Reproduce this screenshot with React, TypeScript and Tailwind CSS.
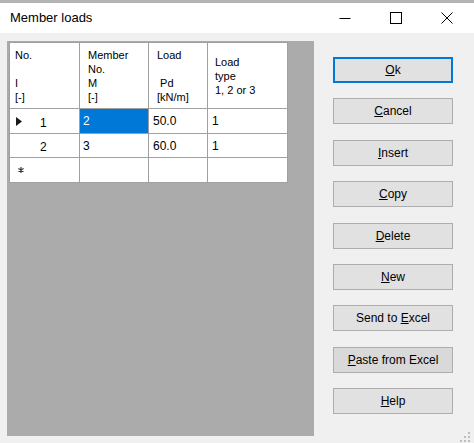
import type { ReactNode } from "react";

const cell = "border-r border-b border-[#a0a0a0] bg-white";

function Arrow() {
  return (
    <svg width="6" height="9" viewBox="0 0 6 9">
      <path d="M0 0 L6 4.5 L0 9 Z" fill="#1a1a1a" />
    </svg>
  );
}

function Star() {
  return (
    <svg width="6" height="6" viewBox="0 0 6 6" stroke="#3a3a3a" strokeWidth="1.2">
      <path d="M3 0 V6 M0.4 1.5 L5.6 4.5 M0.4 4.5 L5.6 1.5" />
    </svg>
  );
}

function Btn({ children, kind }: { children: ReactNode; kind?: "default" | "hover" }) {
  const look =
    kind === "default"
      ? "border-2 border-[#0078d7] bg-[#e1e1e1]"
      : kind === "hover"
        ? "border border-[#adadad] bg-[#d9d9d9]"
        : "border border-[#adadad] bg-[#e1e1e1]";
  return (
    <div className={`flex h-[26px] w-[120px] items-center justify-center text-[12px] ${look}`}>
      <span>{children}</span>
    </div>
  );
}

function WinCtl({ children }: { children: ReactNode }) {
  return <div className="flex w-[51px] items-center justify-center">{children}</div>;
}

export default function App() {
  return (
    <div className="relative h-[443px] w-[474px] overflow-hidden border-t-[3px] border-[#b3b3b3] bg-[#f0f0f0] font-['Liberation_Sans',Arial,sans-serif] text-black">
      {/* title bar */}
      <div className="flex h-[30px] items-center bg-white">
        <span className="flex-1 pl-[10px] text-[13px]">Member loads</span>
        <div className="flex h-full pr-[2px]">
          <WinCtl>
            <svg width="12" height="12" viewBox="0 0 12 12" stroke="#000" strokeWidth="1">
              <path d="M0.5 6.5 H11.5" />
            </svg>
          </WinCtl>
          <WinCtl>
            <svg width="12" height="12" viewBox="0 0 12 12" stroke="#000" strokeWidth="1" fill="none">
              <rect x="0.5" y="0.5" width="11" height="11" />
            </svg>
          </WinCtl>
          <WinCtl>
            <svg width="12" height="12" viewBox="0 0 12 12" stroke="#000" strokeWidth="1">
              <path d="M0.5 0.5 L11.5 11.5 M11.5 0.5 L0.5 11.5" />
            </svg>
          </WinCtl>
        </div>
      </div>

      <div className="flex">
        {/* grid view */}
        <div className="ml-[7px] mt-[8px] h-[395px] w-[307px] bg-[#ababab] pl-[2px] pt-[1px]">
          <div className="grid w-fit grid-cols-[70px_69px_59px_80px] border-l border-t border-[#a0a0a0]">
            {/* header */}
            <div className={`${cell} flex h-[66px] items-center whitespace-pre pl-[5px] text-[11px] leading-[14px]`}>
              {"No.\n\nI\n[-]"}
            </div>
            <div className={`${cell} flex h-[66px] items-center whitespace-pre pl-[8px] text-[11px] leading-[14px]`}>
              {"Member\nNo.\nM\n[-]"}
            </div>
            <div className={`${cell} flex h-[66px] items-center whitespace-pre pl-[8px] text-[11px] leading-[14px]`}>
              {"Load\n\n Pd\n[kN/m]"}
            </div>
            <div className={`${cell} flex h-[66px] items-center whitespace-pre pl-[7px] text-[11px] leading-[14px]`}>
              {"Load\ntype\n1, 2 or 3"}
            </div>

            {/* row 1 */}
            <div className={`${cell} flex h-[25px] items-center pl-[6px] text-[12px]`}>
              <span className="w-[6px]">
                <Arrow />
              </span>
              <span className="ml-[18px] pt-[3px]">1</span>
            </div>
            <div className="flex h-[25px] items-center border-b border-r border-[#a0a0a0] bg-[#0078d7] pl-[3px] text-[12px] text-white">
              2
            </div>
            <div className={`${cell} flex h-[25px] items-center pl-[4px] text-[12px]`}>50.0</div>
            <div className={`${cell} flex h-[25px] items-center pl-[4px] text-[12px]`}>1</div>

            {/* row 2 */}
            <div className={`${cell} flex h-[24px] items-center pl-[6px] text-[12px]`}>
              <span className="w-[6px]" />
              <span className="ml-[18px] pt-[3px]">2</span>
            </div>
            <div className={`${cell} flex h-[24px] items-center pl-[3px] text-[12px]`}>3</div>
            <div className={`${cell} flex h-[24px] items-center pl-[4px] text-[12px]`}>60.0</div>
            <div className={`${cell} flex h-[24px] items-center pl-[4px] text-[12px]`}>1</div>

            {/* new row */}
            <div className={`${cell} flex h-[25px] items-center pl-[8px]`}>
              <Star />
            </div>
            <div className={`${cell} h-[25px]`} />
            <div className={`${cell} h-[25px]`} />
            <div className={`${cell} h-[25px]`} />
          </div>
        </div>

        {/* buttons */}
        <div className="ml-[19px] mt-[24px] flex flex-col gap-[15.4px]">
          <Btn kind="default">
            <u>O</u>k
          </Btn>
          <Btn>
            <u>C</u>ancel
          </Btn>
          <Btn>
            <u>I</u>nsert
          </Btn>
          <Btn>
            <u>C</u>opy
          </Btn>
          <Btn>
            <u>D</u>elete
          </Btn>
          <Btn>
            <u>N</u>ew
          </Btn>
          <Btn>
            Send to <u>E</u>xcel
          </Btn>
          <Btn kind="hover">
            <u>P</u>aste from Excel
          </Btn>
          <Btn>
            <u>H</u>elp
          </Btn>
        </div>
      </div>

      {/* size grip */}
      <svg className="absolute bottom-[1px] right-[4px]" width="10" height="10" viewBox="0 0 10 10" fill="#bdbdbd">
        <rect x="8" y="0" width="2" height="2" />
        <rect x="8" y="4" width="2" height="2" />
        <rect x="4" y="4" width="2" height="2" />
        <rect x="8" y="8" width="2" height="2" />
        <rect x="4" y="8" width="2" height="2" />
        <rect x="0" y="8" width="2" height="2" />
      </svg>
    </div>
  );
}
